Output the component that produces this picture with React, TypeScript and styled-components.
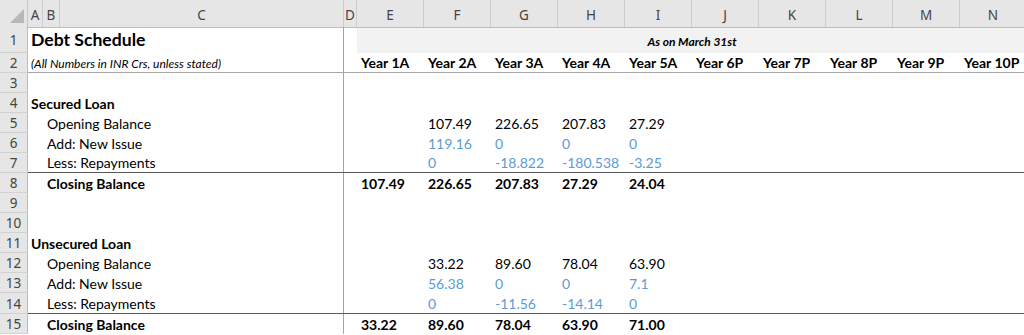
import * as React from "react";
import { styled, createGlobalStyle } from "styled-components";

const GlobalStyle = createGlobalStyle`
  html, body {
    margin: 0;
    padding: 0;
    background: #ffffff;
    overflow: hidden;
  }
`;

const COLS = "15px 17px 284px 13px repeat(10, 67px)";
const LETTERS = ["E", "F", "G", "H", "I", "J", "K", "L", "M", "N"];
const YEARS = [
  "Year 1A",
  "Year 2A",
  "Year 3A",
  "Year 4A",
  "Year 5A",
  "Year 6P",
  "Year 7P",
  "Year 8P",
  "Year 9P",
  "Year 10P",
];

type Kind = "plain" | "input" | "total";

type Line = {
  n: number;
  label?: string;
  indent?: boolean;
  heading?: boolean;
  values?: string[];
  kind?: Kind;
  rule?: boolean;
  h?: number;
};

const loan = (
  start: number,
  title: string,
  opening: string[],
  issue: string[],
  repay: string[],
  closing: string[]
): Line[] => [
  { n: start, label: title, heading: true },
  { n: start + 1, label: "Opening Balance", indent: true, values: opening },
  { n: start + 2, label: "Add: New Issue", indent: true, values: issue, kind: "input" },
  {
    n: start + 3,
    label: "Less: Repayments",
    indent: true,
    values: repay,
    kind: "input",
    rule: true,
  },
  { n: start + 4, label: "Closing Balance", indent: true, values: closing, kind: "total" },
];

const secured = loan(
  4,
  "Secured Loan",
  ["", "107.49", "226.65", "207.83", "27.29"],
  ["", "119.16", "0", "0", "0"],
  ["", "0", "-18.822", "-180.538", "-3.25"],
  ["107.49", "226.65", "207.83", "27.29", "24.04"]
);

const unsecured = loan(
  11,
  "Unsecured Loan",
  ["", "33.22", "89.60", "78.04", "63.90"],
  ["", "56.38", "0", "0", "7.1"],
  ["", "0", "-11.56", "-14.14", "0"],
  ["33.22", "89.60", "78.04", "63.90", "71.00"]
);
unsecured[3].h = 21;

const LINES: Line[] = [
  { n: 3 },
  ...secured,
  { n: 9 },
  { n: 10 },
  ...unsecured,
];

export default function App() {
  return (
    <Sheet>
      <GlobalStyle />
      <Row $h={27}>
        <Corner>
          <svg width="28" height="27" viewBox="0 0 28 27">
            <polygon points="10,23 24,23 24,9" fill="#b8b8b8" />
          </svg>
        </Corner>
        <HeadBand>
          <ColHead>A</ColHead>
          <ColHead>B</ColHead>
          <ColHead>C</ColHead>
          <ColHead>D</ColHead>
          {LETTERS.map((l) => (
            <ColHead key={l}>{l}</ColHead>
          ))}
        </HeadBand>
      </Row>

      <Row $h={26}>
        <RowHead>1</RowHead>
        <Body>
          <Label $title>Debt Schedule</Label>
          <Spacer />
          <Banner>As on March 31st</Banner>
        </Body>
      </Row>

      <Row $h={20}>
        <RowHead>2</RowHead>
        <Body $rule="soft">
          <Label $note>(All Numbers in INR Crs, unless stated)</Label>
          <Spacer />
          {YEARS.map((y) => (
            <Value key={y} $kind="total">
              {y}
            </Value>
          ))}
        </Body>
      </Row>

      {LINES.map((line) => (
        <Row key={line.n} $h={line.h ?? 20}>
          <RowHead>{line.n}</RowHead>
          <Body $rule={line.rule ? "hard" : undefined}>
            <Label $indent={line.indent} $bold={line.heading || line.kind === "total"}>
              {line.label}
            </Label>
            <Spacer />
            {LETTERS.map((l, i) => (
              <Value key={l} $kind={line.kind ?? "plain"}>
                {line.values?.[i] ?? ""}
              </Value>
            ))}
          </Body>
        </Row>
      ))}
    </Sheet>
  );
}

const Sheet = styled.div`
  width: 1024px;
  height: 335px;
  overflow: hidden;
  display: flex;
  flex-direction: column;
  font-family: Lato, "Noto Sans", sans-serif;
  color: #000;
`;

const Row = styled.div<{ $h: number }>`
  display: grid;
  grid-template-columns: 28px 1fr;
  height: ${({ $h }) => $h}px;
  flex: none;
`;

const Corner = styled.div`
  background: #e6e6e6;
  border-right: 1px solid #c6c6c6;
  border-bottom: 1px solid #bdbdbd;
  box-sizing: border-box;
  svg {
    display: block;
  }
`;

const HeadBand = styled.div`
  display: grid;
  grid-template-columns: ${COLS};
  background: #e6e6e6;
  border-bottom: 1px solid #bdbdbd;
  box-sizing: border-box;
`;

const ColHead = styled.div`
  display: flex;
  justify-content: center;
  align-items: flex-end;
  padding-bottom: 3px;
  border-right: 1px solid #cdcdcd;
  font-family: "Noto Sans", sans-serif;
  font-size: 13.5px;
  color: #444;
  overflow: hidden;
`;

const RowHead = styled.div`
  background: #e6e6e6;
  border-right: 1px solid #bdbdbd;
  border-bottom: 1px solid #d2d2d2;
  box-sizing: border-box;
  display: flex;
  justify-content: center;
  align-items: center;
  padding-top: 1px;
  font-family: "Noto Sans", sans-serif;
  font-size: 13.5px;
  color: #444;
`;

const Body = styled.div<{ $rule?: "soft" | "hard" }>`
  display: grid;
  grid-template-columns: ${COLS};
  box-sizing: border-box;
  border-bottom: ${({ $rule }) =>
    $rule === "soft" ? "1px solid #a6a6a6" : $rule === "hard" ? "1px solid #5a5a5a" : "none"};
`;

const Label = styled.div<{
  $indent?: boolean;
  $bold?: boolean;
  $title?: boolean;
  $note?: boolean;
}>`
  grid-column: 1 / 4;
  border-right: 1px solid #a6a6a6;
  padding-left: ${({ $indent }) => ($indent ? 19 : 3)}px;
  display: flex;
  align-items: flex-end;
  padding-bottom: ${({ $title }) => ($title ? 3 : 1)}px;
  font-size: ${({ $title, $note }) => ($title ? 17.6 : $note ? 12 : 14)}px;
  font-weight: ${({ $bold, $title }) => ($bold || $title ? 700 : 400)};
  font-style: ${({ $note }) => ($note ? "italic" : "normal")};
  white-space: nowrap;
`;

const Spacer = styled.div``;

const Banner = styled.div`
  grid-column: 5 / -1;
  background: #f2f2f2;
  margin-top: 1px;
  display: flex;
  justify-content: center;
  align-items: center;
  padding-top: 1px;
  font-size: 12px;
  font-weight: 700;
  font-style: italic;
`;

const Value = styled.div<{ $kind: Kind }>`
  display: flex;
  align-items: flex-end;
  padding: 0 0 1px 4px;
  font-size: 14px;
  white-space: nowrap;
  font-weight: ${({ $kind }) => ($kind === "total" ? 700 : 400)};
  color: ${({ $kind }) => ($kind === "input" ? "#5b9bd5" : "#000")};
`;
